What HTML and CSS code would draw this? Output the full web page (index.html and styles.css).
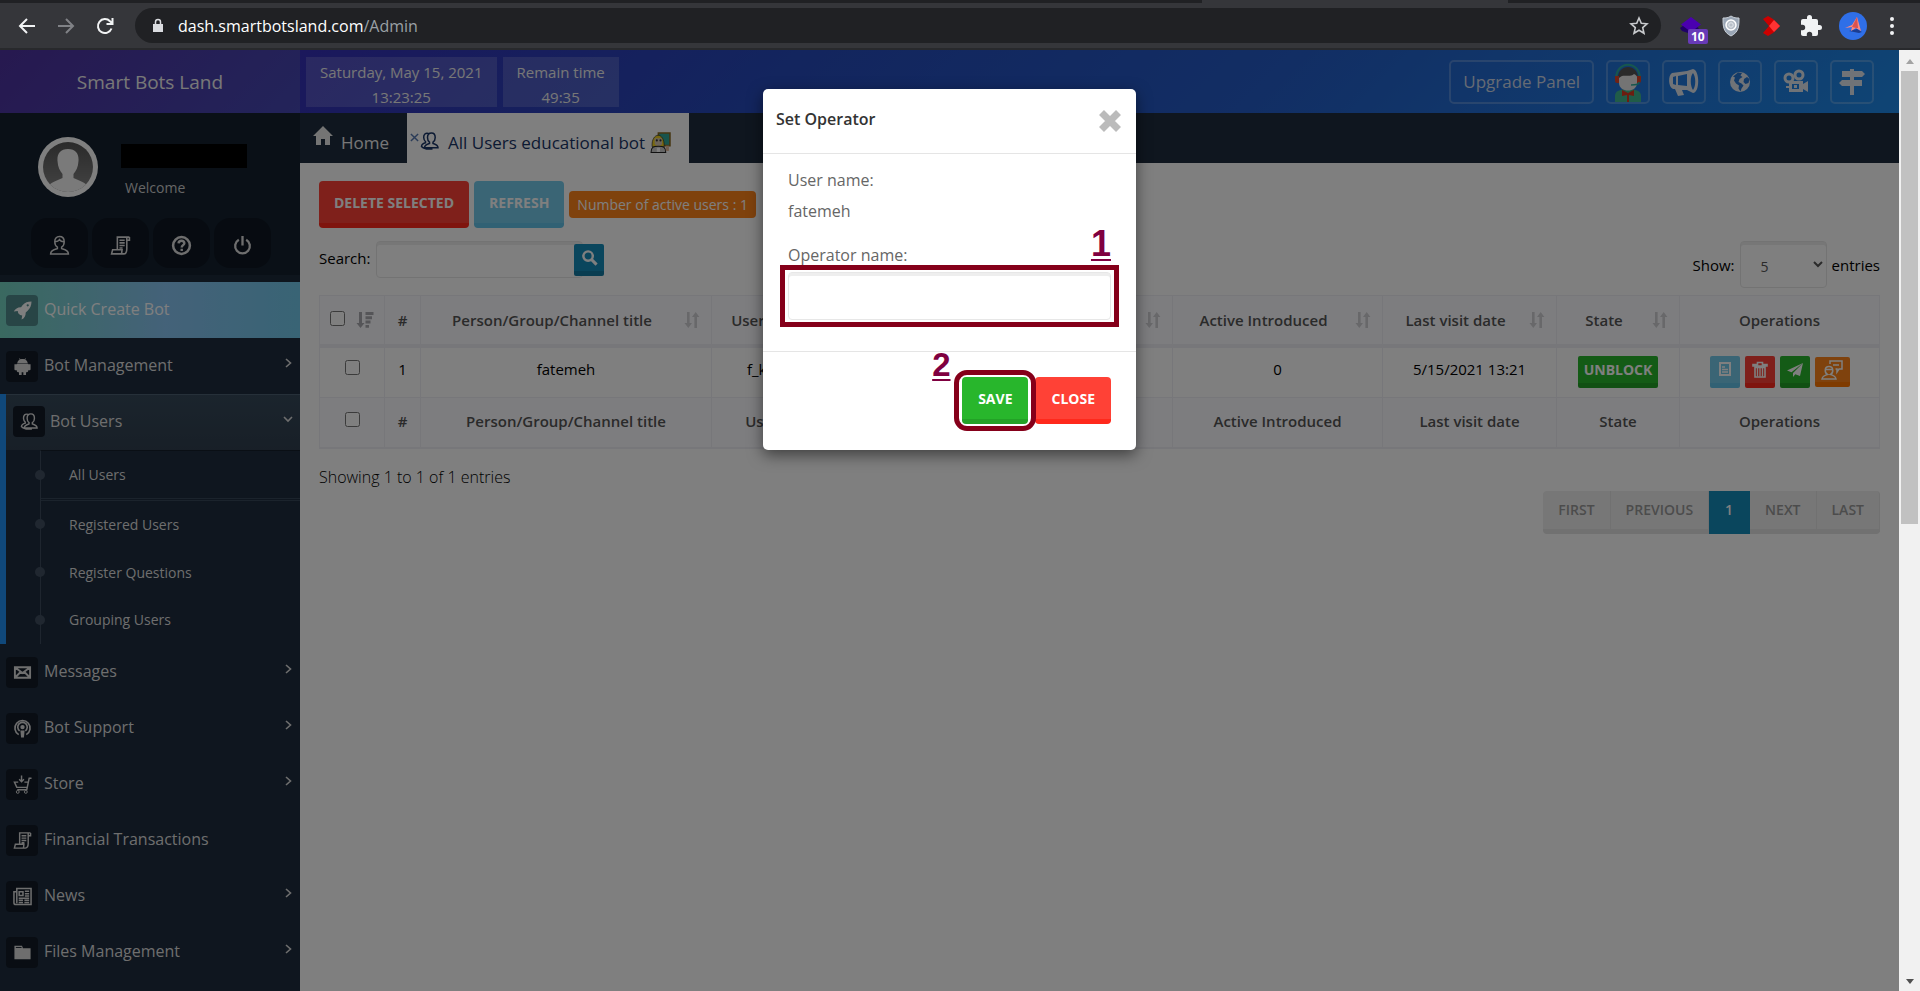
FILE: index.html
```html
<!DOCTYPE html>
<html lang="en">
<head>
	<meta charset="utf-8">
	<meta name="viewport" content="width=device-width, initial-scale=1">
	<title>Smart Bots Land</title>
	<link rel="stylesheet" href="styles.css">
</head>
<body>

	<!-- shared icons -->
	<svg class="sprite" aria-hidden="true">
		<symbol id="i-user" viewBox="0 0 20 20"><path fill="none" stroke="currentColor" stroke-width="1.4" d="M10 1.5c-3 0-4.500 2-4.500 5 0 2.500 1.200 4.300 2.500 5v1.500c-3 1-6.500 1.500-6.500 5h17c0-3.500-3.500-4-6.500-5v-1.500c1.300-.7 2.500-2.500 2.500-5 0-3-1.500-5-4.500-5zM5.800 6.500c2 0 3.500-.8 4.200-2 .8 1.200 2.200 2 4.200 2"/></symbol>
		<symbol id="i-users" viewBox="0 0 20 20"><path fill="none" stroke="currentColor" stroke-width="1.500" d="M11.500 2c-2.500 0-4 1.700-4 4.500 0 2.300 1 4 2 4.700v1.300c-2.500.8-5 1.500-5 4.300h13.500c0-2.800-2.500-3.500-5-4.300v-1.300c1.200-.7 2.200-2.400 2.200-4.700 0-2.800-1.200-4.500-3.700-4.500zM8.500 2.500C5.500 1.500 3.500 3.500 3.700 6.500c.1 2 .8 3.200 1.800 4v1.200c-2 .6-4 1.500-4 3.800 1 1.500 3 2 5 2.500h6"/></symbol>
		<symbol id="i-receipt" viewBox="0 0 20 20"><path fill="none" stroke="currentColor" stroke-width="1.500" d="M7 14V2h11.500M16 2v11c0 3-1 5-3 5H1.500l1-4h9l-.5 4M18.500 2v3H16M9 5h5M9 7.500h5M9 10h5M9 12.300h3"/></symbol>
		<symbol id="i-help" viewBox="0 0 20 20"><circle cx="10" cy="10" r="8" fill="none" stroke="currentColor" stroke-width="2.400"/><path fill="none" stroke="currentColor" stroke-width="2.300" d="M7.200 8c.2-3.500 5.800-3.200 5.500 0-.2 1.800-2.500 1.600-2.500 3.800M10.200 13v2.300"/></symbol>
		<symbol id="i-power" viewBox="0 0 20 20"><path fill="none" stroke="currentColor" stroke-width="2.200" d="M6.500 4.500a7 7 0 1 0 7 0M10 1v9"/></symbol>
		<symbol id="i-rocket" viewBox="0 0 20 20"><path fill="currentColor" d="M19.500.5c-4 0-7 1-9.500 4L8.500 6.500C5 6.300 2.500 8 .8 11l4.200-.4.500 2.200 2 2 2.200.4-.7 4.300c3-1.500 4.500-4 4.400-7.500l2-1.800c2.700-2.500 4-5.700 4.100-9.700z"/><circle cx="15.500" cy="4.500" r="1.200" fill="#508a8c"/></symbol>
		<symbol id="i-android" viewBox="0 0 20 20"><path fill="currentColor" d="M4.500 6.500c.2-2 1.200-3 2.500-3.700L6.200 1l1.900 1.300c1.200-.4 2.600-.4 3.800 0L13.800 1 13 2.800c1.300.7 2.300 1.700 2.500 3.700zM4 7h12v7.500c0 1-.5 1.500-1.300 1.500h-1v3h-2.800v-3H9.100v3H6.300v-3h-1C4.500 16 4 15.500 4 14.500zM1.500 7.500H4V14H2.500c-.6 0-1-.4-1-1zM16 7.500h2.500V13c0 .6-.4 1-1 1H16z"/></symbol>
		<symbol id="i-mail" viewBox="0 0 20 20"><path fill="none" stroke="currentColor" stroke-width="2" d="M2 4.500h16v11H2zM2 4.500l8 6 8-6M2 15.500l6-6M18 15.500l-6-6"/></symbol>
		<symbol id="i-podcast" viewBox="0 0 20 20"><path fill="none" stroke="currentColor" stroke-width="1.700" d="M6 16.500a8 8 0 1 1 8 0M7 12.500a5 5 0 1 1 6 0"/><circle cx="10" cy="8.500" r="2.300" fill="currentColor"/><path fill="currentColor" d="M7.800 12h4.400l-.7 7.500h-3z"/></symbol>
		<symbol id="i-cart" viewBox="0 0 20 20"><path fill="none" stroke="currentColor" stroke-width="1.500" d="M19.500 3.500H17l-2.500 12H4.500M15.500 13H4L1.500 7.500h4M12 7.500h4.300M9 .5v6M6.500 4.500L9 7l2.500-2.500"/><circle cx="5" cy="17.800" r="1.500" fill="none" stroke="currentColor"/><circle cx="13.500" cy="17.800" r="1.500" fill="none" stroke="currentColor"/></symbol>
		<symbol id="i-news" viewBox="0 0 20 20"><path fill="none" stroke="currentColor" stroke-width="1.600" d="M4 1.500h15v17H3c-1.500 0-2-.8-2-2V5h3zM4 5v12M6.500 5h4v4h-4zM12.500 4.500H17M12.500 7H17M12.500 9.500H17M6 11.800h11M6 14h4.500M12 14h5M6 16.300h4.500M12 16.300h5"/></symbol>
		<symbol id="i-folder" viewBox="0 0 20 20"><path fill="currentColor" d="M1.500 3h8l1 2.500h8V17h-17z"/><path stroke="#121b27" stroke-width="1" d="M3 4.700h6"/></symbol>
		<symbol id="i-right" viewBox="0 0 10 10"><path fill="none" stroke="currentColor" stroke-width="1.600" d="M3 1l4.500 4L3 9"/></symbol>
		<symbol id="i-down" viewBox="0 0 10 10"><path fill="none" stroke="currentColor" stroke-width="1.600" d="M1 3l4 4 4-4"/></symbol>
		<symbol id="i-sort" viewBox="0 0 18 18"><path fill="currentColor" d="M4 1h2.600v11H9l-3.700 5L1.500 12H4zM11.400 17H14V6h2.400L12.700 1 9 6h2.400z"/></symbol>
		<symbol id="i-sortdesc" viewBox="0 0 18 18"><path fill="currentColor" d="M3 1h3v11h2.500l-4 5-4-5H3zM9.500 1h8v3h-8zM9.500 5.300H16v3H9.500zM9.500 9.500h5v3h-5zM9.500 14H13v2.700H9.500z"/></symbol>
		<symbol id="i-search" viewBox="0 0 18 18"><circle cx="7.500" cy="7.500" r="5" fill="none" stroke="currentColor" stroke-width="2.600"/><path stroke="currentColor" stroke-width="3.200" d="M11 11l5.500 5.500"/></symbol>
		<symbol id="i-times" viewBox="0 0 22 22"><path stroke="currentColor" stroke-width="7" d="M2.500 2.500l17 17M19.500 2.500l-17 17"/></symbol>
	</svg>

	<!-- browser bar -->
	<div class="tab-strip"><span></span></div>
	<div class="toolbar">
		<button class="nav-btn" aria-label="Back"><svg viewBox="0 0 18 18"><path d="M17 9H2M9 2L2 9l7 7"/></svg></button>
		<button class="nav-btn off" aria-label="Forward"><svg viewBox="0 0 18 18"><path d="M1 9h15M9 2l7 7-7 7"/></svg></button>
		<button class="nav-btn" aria-label="Reload"><svg viewBox="0 0 18 18"><path d="M15.500 11.500A7 7 0 1 1 14 4.200L16 6M16.500 1v6h-6"/></svg></button>
		<div class="address">
			<svg class="lock" viewBox="0 0 12 15"><path fill="#dadce0" d="M1 6h10v8H1z"/><path fill="none" stroke="#dadce0" stroke-width="1.500" d="M3.500 6V4a2.500 2.500 0 0 1 5 0v2"/></svg>
			<p class="url">dash.smartbotsland.com<span>/Admin</span></p>
			<svg class="star" viewBox="0 0 20 20"><path fill="none" stroke="#c8cacd" stroke-width="1.600" d="M10 2l2.300 5.300 5.700.5-4.300 3.800 1.300 5.700-5-3-5 3 1.300-5.700L2 7.800l5.700-.5z"/></svg>
		</div>
		<div class="extensions">
			<div class="ext">
				<svg viewBox="0 0 24 24"><path fill="#1f0068" d="M1 14l11-8 9 10-9 4-9-3z"/><path fill="#4a00b0" d="M12 3l10 7.500-10 7.500L2 10.500z"/></svg>
				<span class="ext-count">10</span>
			</div>
			<svg viewBox="0 0 24 24"><path fill="#9aa6b5" stroke="#c9d0d8" d="M12 2c3 2 5 2 8 2 0 8 0 14-8 18C4 18 4 12 4 4c3 0 5 0 8-2z"/><circle cx="12" cy="11" r="5" fill="#b8bfc8" stroke="#fff" stroke-width="1.500"/><circle cx="12" cy="11" r="2.200" fill="none" stroke="#e4e8ec"/></svg>
			<svg viewBox="0 0 24 24"><path fill="#cc0000" d="M4 5l5-3 5 3 7 7-7 7-5 3-5-3 6-7z"/><path fill="#ff3333" d="M15 6l6 6-6 6-5-6z"/></svg>
			<svg viewBox="0 0 24 24"><path fill="#f1f3f4" d="M20.500 11H19V7a2 2 0 0 0-2-2h-4V3.500a2.500 2.500 0 0 0-5 0V5H4a2 2 0 0 0-2 2v3.800h1.500a2.700 2.700 0 0 1 0 5.400H2V20c0 1.100.9 2 2 2h3.800v-1.500a2.700 2.700 0 0 1 5.400 0V22H17a2 2 0 0 0 2-2v-4h1.500a2.500 2.500 0 0 0 0-5z"/></svg>
			<svg class="ext-avatar" viewBox="0 0 28 28"><circle cx="14" cy="14" r="14" fill="#2f6fe8"/><path fill="#1c3d91" d="M10 19l8-2 5 3-3 1z"/><path fill="#ff8a80" d="M18 5l4 14-5-3-5 3 1-4-7 1 7-3z"/><path fill="#d9534f" d="M18 5l1 11-2 0-4-1z"/></svg>
			<svg class="dots" viewBox="0 0 6 18"><g fill="#f1f3f4"><circle cx="3" cy="2" r="2"/><circle cx="3" cy="9" r="2"/><circle cx="3" cy="16" r="2"/></g></svg>
		</div>
	</div>

	<div class="viewport">
		<div class="page">

			<aside class="sidebar">
				<h1 class="brand">Smart Bots Land</h1>
				<div class="profile">
					<div class="profile-top">
						<svg class="avatar" viewBox="0 0 60 60"><defs><linearGradient id="av" x2="0" y2="1"><stop offset="0" stop-color="#555"/><stop offset="1" stop-color="#888"/></linearGradient><clipPath id="avc"><circle cx="30" cy="30" r="25"/></clipPath></defs><circle cx="30" cy="30" r="30" fill="#fff"/><circle cx="30" cy="30" r="25" fill="url(#av)"/><path clip-path="url(#avc)" fill="#f5f5f5" d="M30 12c-8 0-11 5-10.500 12 .3 6 2.500 10 5 13v4c-6 3-13 4-14.500 10v8h40v-8c-1.500-6-8.500-7-14.500-10v-4c2.500-3 4.700-7 5-13C41 17 38 12 30 12z"/></svg>
						<div>
							<div class="redacted"></div>
							<p class="welcome">Welcome</p>
						</div>
					</div>
					<div class="profile-actions">
						<button aria-label="Profile"><svg><use href="#i-user"/></svg></button>
						<button aria-label="Transactions"><svg><use href="#i-receipt"/></svg></button>
						<button aria-label="Help"><svg><use href="#i-help"/></svg></button>
						<button aria-label="Log out"><svg><use href="#i-power"/></svg></button>
					</div>
				</div>
				<nav class="menu">
					<a href="#" class="menu-item quick"><span class="menu-icon"><svg><use href="#i-rocket"/></svg></span>Quick Create Bot</a>
					<a href="#" class="menu-item"><span class="menu-icon"><svg><use href="#i-android"/></svg></span>Bot Management<svg class="caret"><use href="#i-right"/></svg></a>
					<div class="menu-open">
						<a href="#" class="menu-item"><span class="menu-icon"><svg><use href="#i-users"/></svg></span>Bot Users<svg class="caret"><use href="#i-down"/></svg></a>
						<div class="submenu">
							<a href="#">All Users</a>
							<a href="#">Registered Users</a>
							<a href="#">Register Questions</a>
							<a href="#">Grouping Users</a>
						</div>
					</div>
					<a href="#" class="menu-item"><span class="menu-icon"><svg><use href="#i-mail"/></svg></span>Messages<svg class="caret"><use href="#i-right"/></svg></a>
					<a href="#" class="menu-item"><span class="menu-icon"><svg><use href="#i-podcast"/></svg></span>Bot Support<svg class="caret"><use href="#i-right"/></svg></a>
					<a href="#" class="menu-item"><span class="menu-icon"><svg><use href="#i-cart"/></svg></span>Store<svg class="caret"><use href="#i-right"/></svg></a>
					<a href="#" class="menu-item"><span class="menu-icon"><svg><use href="#i-receipt"/></svg></span>Financial Transactions</a>
					<a href="#" class="menu-item"><span class="menu-icon"><svg><use href="#i-news"/></svg></span>News<svg class="caret"><use href="#i-right"/></svg></a>
					<a href="#" class="menu-item"><span class="menu-icon"><svg><use href="#i-folder"/></svg></span>Files Management<svg class="caret"><use href="#i-right"/></svg></a>
				</nav>
			</aside>

			<main class="main">
				<header class="topbar">
					<div class="clock">Saturday, May 15, 2021<br>13:23:25</div>
					<div class="clock">Remain time<br>49:35</div>
					<div class="top-actions">
						<button class="upgrade">Upgrade Panel</button>
						<button aria-label="Support"><svg viewBox="0 0 40 40"><path fill="#40b890" d="M7 40v-6c0-5 5-7 13-7s13 2 13 7v6z"/><path fill="#d83a20" d="M14 28l6 3 6-3v6l-5-1v7h-2v-7l-5 1z"/><path fill="none" stroke="#2fae9c" stroke-width="2" d="M8 17C8 -2 32 -2 32 17"/><path fill="#e8e8e8" d="M11 12h18v9c0 10-18 10-18 0z"/><path fill="#555" d="M10 17c-1-16 21-16 20 0-1-3-2-4-4-5-3 3-9 1-12 2-2 1-3 2-4 3z"/><path fill="#e0452a" d="M7 14h4v7H9q-2 0-2-2zM29 14h4v5q0 2-2 2h-2z"/><path fill="none" stroke="#2fae9c" stroke-width="1.500" d="M31 20c0 3-4 3-8 3"/></svg></button>
						<button aria-label="Announcements"><svg viewBox="0 0 40 40"><path fill="#e0e6ee" fill-rule="evenodd" d="M8 11l15-2 6-2c7 1 7 24 0 24l-6-3-5 0 2 5-6 1-3-7H9c-5-2-5-14-1-16zm1 4v7l3 1v-9zm5-1v9l9 1V12zm15-3c-3 3-3 13 0 17 3-4 3-13 0-17z"/></svg></button>
						<button aria-label="Language"><svg viewBox="0 0 40 40"><circle cx="20" cy="20" r="10" fill="#e0e6ee"/><path fill="#2474d0" d="M18 10.500l4 .5-1.500 2.500 2 1.500-3 2-1 3 3 1.500 2 2-2 3-1 3-2-3 .5-3-3-2-2-3 1-3-2-1zM24 17l3-2 2.500 2-1 4-3 1-2-2z"/></svg></button>
						<button aria-label="Videos"><svg viewBox="0 0 40 40"><circle cx="13" cy="16" r="4" fill="none" stroke="#e0e6ee" stroke-width="3"/><circle cx="23" cy="13" r="4" fill="none" stroke="#e0e6ee" stroke-width="3"/><path fill="#e0e6ee" fill-rule="evenodd" d="M13 19h14v3l5-3v11l-5-3v3H13zM16 22v5h7v-5z"/><path fill="#e0e6ee" d="M18 23h3v3h-3zM10 24h3v2h-3z"/></svg></button>
						<button aria-label="Guide"><svg viewBox="0 0 40 40"><path fill="#e0e6ee" d="M18 7h4v2h8l3 3-3 3H10V9h8zM18 15h4v3h8v6H10l-3-3 3-3h8zM18 24h4v9h-4z"/></svg></button>
					</div>
				</header>

				<nav class="tabs">
					<a href="#" class="tab"><svg class="home" viewBox="0 0 20 20"><path fill="#e8e8e8" d="M10 0l10 10h-3v9h-5v-6H8v6H3v-9H0z"/></svg>Home</a>
					<a href="#" class="tab active"><svg class="tab-close" viewBox="0 0 10 10"><path stroke="#5577b0" stroke-width="1.600" d="M1 1l8 8M9 1L1 9"/></svg><svg class="tab-users"><use href="#i-users"/></svg>All Users educational bot
						<svg class="teacher" viewBox="0 0 20 20"><path fill="#30a898" stroke="#8a6a20" stroke-width="1.500" d="M8 1h11v12H8z"/><path fill="#f0d020" stroke="#222" stroke-width=".6" d="M2 14C1 0 14-1 13.500 14z"/><path fill="#d8c8b0" d="M4.500 6h7v5c0 3-7 3-7 0z"/><path fill="#ccc" stroke="#222" d="M1 19.500c0-5 2-6 7-6s7 1 7 6z"/><path fill="#fff" d="M6.500 15h3v4h-3z"/><circle cx="6.500" cy="8" r="1" fill="#333"/><circle cx="10" cy="8" r="1" fill="#333"/><path fill="#e0b898" d="M15 13h3v5h-3z"/></svg></a>
				</nav>

				<section class="content">
					<div class="actions">
						<button class="btn btn-danger">DELETE SELECTED</button>
						<button class="btn btn-info">REFRESH</button>
						<span class="label-count">Number of active users : 1</span>
					</div>

					<div class="filters">
						<div class="search">
							<label for="search">Search:</label>
							<input type="text" id="search" class="field">
							<button class="search-btn" aria-label="Search"><svg><use href="#i-search"/></svg></button>
						</div>
						<div class="show">
							<label for="show">Show:</label>
							<select id="show" class="field"><option>5</option></select>
							<span>entries</span>
						</div>
					</div>

					<table class="users">
						<colgroup>
							<col class="c-check"><col class="c-num"><col class="c-title"><col class="c-user"><col><col class="c-active"><col class="c-date"><col class="c-state"><col class="c-ops">
						</colgroup>
						<thead>
							<tr>
								<th><div class="th"><input type="checkbox" aria-label="Select all"><svg class="sorted"><use href="#i-sortdesc"/></svg></div></th>
								<th>#</th>
								<th><div class="th"><span>Person/Group/Channel title</span><svg><use href="#i-sort"/></svg></div></th>
								<th><div class="th"><span>User name</span><svg><use href="#i-sort"/></svg></div></th>
								<th><div class="th"><span></span><svg><use href="#i-sort"/></svg></div></th>
								<th><div class="th"><span>Active Introduced</span><svg><use href="#i-sort"/></svg></div></th>
								<th><div class="th"><span>Last visit date</span><svg><use href="#i-sort"/></svg></div></th>
								<th><div class="th"><span>State</span><svg><use href="#i-sort"/></svg></div></th>
								<th>Operations</th>
							</tr>
						</thead>
						<tbody>
							<tr>
								<td><input type="checkbox" aria-label="Select fatemeh"></td>
								<td>1</td>
								<td>fatemeh</td>
								<td class="user-cell">f_k</td>
								<td></td>
								<td>0</td>
								<td>5/15/2021 13:21</td>
								<td><button class="btn btn-success">UNBLOCK</button></td>
								<td>
									<div class="ops">
										<button class="btn btn-info btn-icon" aria-label="Details"><svg viewBox="0 0 18 18"><path fill="none" stroke="#fff" stroke-width="2" d="M4 2h10v12H4z"/><path stroke="#fff" stroke-width="1.500" d="M6 6h3M6 8.500h6M6 11h6"/></svg></button>
										<button class="btn btn-danger btn-icon" aria-label="Delete"><svg viewBox="0 0 18 18"><path fill="none" stroke="#fff" stroke-width="1.600" d="M2 5V3.500h4.500v-2h5v2H16V5zM4 6.500h10V16H4z"/><path stroke="#fff" stroke-width="1.300" d="M6.500 6v9.500M9 6v9.500M11.500 6v9.500"/></svg></button>
										<button class="btn btn-success btn-icon" aria-label="Send"><svg viewBox="0 0 18 18"><path fill="#fff" d="M17 2L1 9.500l4.500 1.800zM17 2L7 12v4l2.300-2.700L14 15z"/></svg></button>
										<button class="btn btn-warning btn-icon wide" aria-label="Set operator"><svg viewBox="0 0 22 20"><path fill="none" stroke="#fff" stroke-width="1.500" d="M9 4V1h12v8h-3l-2 3v-3h-1.500M12 5h6M8 6.500c-5 0-4.500 6.500-1.500 8-3 1-5 1.500-5.500 4.500h14c-.5-3-2.500-3.500-5.500-4.500 3-1.500 3.500-8-1.500-8zM4.500 9.500h7"/></svg></button>
									</div>
								</td>
							</tr>
						</tbody>
						<tfoot>
							<tr>
								<th><input type="checkbox" aria-label="Select all rows"></th>
								<th>#</th>
								<th>Person/Group/Channel title</th>
								<th>User name</th>
								<th></th>
								<th>Active Introduced</th>
								<th>Last visit date</th>
								<th>State</th>
								<th>Operations</th>
							</tr>
						</tfoot>
					</table>

					<p class="info">Showing 1 to 1 of 1 entries</p>
					<nav class="pagination">
						<a href="#">FIRST</a>
						<a href="#">PREVIOUS</a>
						<a href="#" class="current">1</a>
						<a href="#">NEXT</a>
						<a href="#">LAST</a>
					</nav>
				</section>
			</main>

			<div class="backdrop">
				<div class="modal" role="dialog" aria-labelledby="modal-title">
					<div class="modal-header">
						<h2 id="modal-title">Set Operator</h2>
						<button class="close" aria-label="Close dialog"><svg><use href="#i-times"/></svg></button>
					</div>
					<div class="modal-body">
						<p>User name:</p>
						<p class="user-value">fatemeh</p>
						<label for="operator">Operator name:</label>
						<div class="marked">
							<input type="text" id="operator" class="field">
							<span class="mark-box"></span>
							<span class="mark-num num-1">1</span>
						</div>
					</div>
					<div class="modal-footer">
						<div class="marked">
							<button class="btn btn-success">SAVE</button>
							<span class="mark-box round"></span>
							<span class="mark-num num-2">2</span>
						</div>
						<button class="btn btn-danger">CLOSE</button>
					</div>
				</div>
			</div>
		</div>

		<div class="scrollbar">
			<span class="arrow up"></span>
			<span class="thumb"></span>
			<span class="arrow down"></span>
		</div>
	</div>

</body>
</html>
```
FILE: styles.css
```css
* {
	box-sizing: border-box;
}
body {
	margin: 0;
	height: 100vh;
	display: flex;
	flex-direction: column;
	overflow: hidden;
	font-family: "Open Sans", "Noto Sans", sans-serif;
	font-size: 14px;
	color: #000;
}
h1, h2, p {
	margin: 0;
	font-weight: 400;
}
a {
	color: inherit;
	text-decoration: none;
}
button {
	font-family: inherit;
	border: 0;
	padding: 0;
	background: none;
	cursor: pointer;
}
svg {
	display: block;
	flex: none;
}
input[type="checkbox"] {
	width: 15px;
	height: 15px;
	margin: 0;
}
.sprite {
	width: 0;
	height: 0;
	position: absolute;
}

/* browser bar */
.tab-strip {
	height: 3px;
	flex: none;
	background: #202124;
	display: flex;
	justify-content: flex-end;
}
.tab-strip span {
	width: 306px;
	margin-right: 412px;
	background: #35363a;
}
.toolbar {
	flex: none;
	height: 47px;
	display: flex;
	align-items: center;
	background: #35363a;
	border-bottom: 2px solid #28292c;
	padding: 0 25px 0 18px;
}
.nav-btn {
	margin-right: 21px;
}
.nav-btn svg {
	width: 18px;
	height: 18px;
	fill: none;
	stroke: #f1f3f4;
	stroke-width: 2;
}
.nav-btn.off svg {
	stroke: #808286;
}
.address {
	flex: 1;
	height: 35px;
	border-radius: 18px;
	background: #202124;
	display: flex;
	align-items: center;
	padding: 0 12px 0 17px;
}
.lock {
	width: 12px;
	height: 15px;
}
.url {
	flex: 1;
	margin-left: 14px;
	font-size: 16px;
	color: #fff;
}
.url span {
	color: #9aa0a6;
}
.star {
	width: 20px;
	height: 20px;
}
.extensions {
	display: flex;
	align-items: center;
	gap: 16px;
	margin-left: 18px;
}
.extensions svg {
	width: 24px;
	height: 24px;
}
.extensions .ext-avatar {
	width: 28px;
	height: 28px;
}
.extensions .dots {
	width: 6px;
	height: 18px;
	margin-left: 6px;
}
.ext {
	position: relative;
}
.ext-count {
	position: absolute;
	left: 9px;
	top: 15px;
	background: #673ab7;
	color: #fff;
	font-size: 12px;
	line-height: 15px;
	font-weight: 700;
	border-radius: 2px;
	padding: 0 3px;
}

/* page shell */
.viewport {
	flex: 1;
	min-height: 0;
	display: flex;
}
.page {
	flex: 1;
	min-width: 0;
	display: flex;
	position: relative;
	overflow: hidden;
	background: #fff;
}
.scrollbar {
	width: 21px;
	background: #f1f1f1;
	display: flex;
	flex-direction: column;
	align-items: center;
	padding: 9px 0 7px;
}
.thumb {
	width: 17px;
	height: 49%;
	margin-top: 7px;
	background: #c1c1c1;
}
.arrow {
	border: 4px solid transparent;
}
.arrow.up {
	border-top: 0;
	border-bottom: 5px solid #a3a3a3;
}
.arrow.down {
	margin-top: auto;
	border-bottom: 0;
	border-top: 5px solid #505050;
}

/* sidebar */
.sidebar {
	width: 300px;
	flex: none;
	background: #1e2c3e;
	color: #fff;
}
.brand {
	height: 63px;
	line-height: 64px;
	text-align: center;
	font-size: 19px;
	color: #f0f0f0;
	background: linear-gradient(135deg, #4e32a0, #4648b4);
}
.profile {
	height: 169px;
	padding: 24px 29px 0 31px;
	background: #14212f;
	border-bottom: 7px solid #1c2a3b;
}
.profile-top {
	display: flex;
	gap: 23px;
	padding-left: 7px;
}
.avatar {
	width: 60px;
	height: 60px;
}
.redacted {
	width: 126px;
	height: 24px;
	margin-top: 7px;
	background: #000;
}
.welcome {
	margin: 10px 0 0 4px;
	line-height: 20px;
	color: #ccc;
}
.profile-actions {
	display: flex;
	gap: 4px;
	margin-top: 20px;
}
.profile-actions button {
	flex: 1;
	height: 50px;
	border-radius: 16px;
	background: #0f1722;
	color: #ddd;
	display: grid;
	place-items: center;
}
.profile-actions svg {
	width: 21px;
	height: 21px;
	margin-top: 5px;
}
.menu-item {
	display: flex;
	align-items: center;
	height: 56px;
	padding: 0 7px 2px 6px;
	font-size: 16px;
	color: #ddd;
}
.menu-icon {
	width: 32px;
	height: 31px;
	margin-right: 6px;
	margin-top: 2px;
	border-radius: 4px;
	background: #121b27;
	display: grid;
	place-items: center;
}
.menu-icon svg {
	width: 19px;
	height: 19px;
}
.caret {
	width: 10px;
	height: 10px;
	margin: 0 0 4px auto;
}
.quick {
	color: #fff;
	background: linear-gradient(90deg, #74d2c0, #88c4f2 55%, #72c8ea);
}
.quick .menu-icon {
	background: #508a8c;
}
.menu-open {
	border-left: 6px solid #2090f4;
}
.menu-open > .menu-item {
	background: linear-gradient(#36495a, #303f4f);
	border-top: 1px solid #4c6072;
	padding-left: 7px;
	padding-bottom: 4px;
}
.menu-open .menu-icon {
	margin-right: 5px;
}
.submenu {
	margin-left: 34px;
	border-left: 1px solid #3c4b5c;
	border-top: 1px solid #141e2a;
}
.submenu a {
	display: flex;
	align-items: center;
	height: 48px;
	padding-bottom: 2px;
	color: #ddd;
}
.submenu a::before {
	content: "";
	width: 10px;
	height: 10px;
	margin-left: -6px;
	margin-right: 24px;
	border-radius: 50%;
	background: #404f60;
}
.submenu a:first-child {
	height: 50px;
	border-bottom: 3px double #364658;
	padding: 0;
}
.submenu a:last-child {
	height: 47px;
}

/* top bar */
.main {
	flex: 1;
	min-width: 0;
}
.topbar {
	height: 63px;
	display: flex;
	align-items: center;
	gap: 6px;
	padding: 0 25px 0 6px;
	background: linear-gradient(135deg, #3630b8, #264abc 30%, #245cc8 60%, #1e8aea);
}
.clock {
	height: 50px;
	padding: 3px 14px 0;
	line-height: 25px;
	font-size: 15px;
	text-align: center;
	color: #eee;
	background: rgba(255, 255, 255, 0.16);
}
.top-actions {
	margin-left: auto;
	display: flex;
	gap: 12px;
}
.top-actions button {
	width: 44px;
	height: 44px;
	border: 2px solid rgba(255, 255, 255, 0.22);
	border-radius: 5px;
}
.top-actions .upgrade {
	width: auto;
	padding: 0 12px;
	font-size: 17px;
	color: #ccd6e8;
}
.top-actions svg {
	width: 40px;
	height: 40px;
}
.tabs {
	height: 50px;
	display: flex;
	background: #1e2c3e;
}
.tab {
	display: flex;
	align-items: center;
	font-size: 17px;
	color: #eee;
	padding: 8px 18px 0 13px;
}
.home {
	width: 20px;
	height: 20px;
	margin: 0 8px 12px 0;
}
.tab.active {
	background: #fff;
	color: #183466;
	padding: 8px 18px 0 3px;
}
.tab-close {
	width: 9px;
	height: 9px;
	margin-bottom: 10px;
}
.tab-users {
	width: 20px;
	height: 20px;
	margin: 0 8px 2px 1px;
}
.teacher {
	width: 21px;
	height: 21px;
	margin-left: 5px;
}

/* content */
.content {
	padding: 18px 19px;
}
.actions {
	display: flex;
	align-items: center;
	gap: 5px;
}
.btn {
	height: 47px;
	padding: 0 15px;
	border-radius: 4px;
	border-bottom: 5px solid;
	color: #fff;
	font-size: 14px;
	font-weight: 700;
}
.btn-danger {
	background: #ff4136;
	border-color: #ff291c;
}
.btn-info {
	background: #75caeb;
	border-color: #62c2e8;
}
.btn-success {
	background: #28b62c;
	border-color: #23a127;
}
.btn-warning {
	background: #ff851b;
	border-color: #ff7701;
}
.label-count {
	padding: 0 8px;
	line-height: 27px;
	border-radius: 4px;
	background: #ff851b;
	color: #fff;
}
.filters {
	display: flex;
	justify-content: space-between;
	margin-top: 13px;
	font-size: 15px;
}
.search, .show {
	display: flex;
}
.search label {
	margin: 7px 6px 0 0;
}
.field {
	border: 1px solid #e7e7e7;
	border-radius: 4px;
	background: #fff;
	box-shadow: inset 0 3px 0 #eee;
	font-family: inherit;
	font-size: 14px;
	color: #555;
}
.search .field {
	width: 207px;
	height: 37px;
}
.search-btn {
	width: 30px;
	height: 32px;
	margin: 3px 0 0 -9px;
	background: #158cba;
	border-bottom: 5px solid #127ba3;
	border-radius: 2px;
	color: #fff;
	display: grid;
	place-items: center;
	position: relative;
}
.search-btn svg {
	width: 17px;
	height: 17px;
}
.show {
	align-items: center;
	gap: 5px;
}
.show .field {
	width: 87px;
	height: 47px;
	padding: 4px 2px 0 16px;
}

/* users table */
.users {
	width: 100%;
	margin-top: 7px;
	table-layout: fixed;
	border-collapse: collapse;
	border: 1px solid #eeeef4;
	border-bottom-width: 2px;
}
.c-check { width: 65px; }
.c-num { width: 36px; }
.c-title { width: 291px; }
.c-user { width: 146px; }
.c-active { width: 210px; }
.c-date { width: 174px; }
.c-state { width: 123px; }
.c-ops { width: 200px; }
.users th, .users td {
	border: 1px solid #eeeef4;
	padding: 0;
	text-align: center;
	font-size: 15px;
}
.users th {
	height: 50px;
	background: #fbfbff;
	color: #555;
	font-weight: 600;
}
.users thead th {
	border-bottom: 4px solid #eeeef4;
}
.users td {
	height: 52px;
	padding-bottom: 6px;
	font-weight: 400;
}
.users tfoot th {
	padding-bottom: 2px;
}
.users .user-cell {
	text-align: left;
	padding-left: 35px;
}
.users td .btn, .users .ops {
	position: relative;
	top: 3px;
}
.th {
	display: flex;
	align-items: center;
	padding-right: 10px;
}
.th span {
	flex: 1;
}
.th svg {
	width: 18px;
	height: 18px;
	color: #d0d0d4;
}
.th .sorted {
	color: #aaaab0;
}
.th input[type="checkbox"] {
	margin: 0 11px 2px 10px;
}
.users .btn {
	height: 32px;
	padding: 0 6px;
	border-radius: 2px;
	border-bottom-width: 5px;
}
.ops {
	display: flex;
	justify-content: center;
	gap: 5px;
}
.users .ops .btn {
	width: 30px;
	padding: 0;
	display: grid;
	place-items: center;
	top: 0;
}
.users .ops .wide {
	width: 35px;
	height: 30px;
	margin-top: 1px;
}
.btn-icon svg {
	width: 18px;
	height: 18px;
}
.wide svg {
	width: 22px;
	height: 20px;
}
.info {
	margin-top: 17px;
	line-height: 22px;
	font-size: 16px;
	font-weight: 300;
}
.pagination {
	display: flex;
	width: max-content;
	margin: 3px 0 0 auto;
}
.pagination a {
	height: 43px;
	line-height: 37px;
	padding: 0 15px;
	background: #eee;
	border-bottom: 5px solid #e2e2e2;
	border-right: 1px solid #e2e2e2;
	color: #999;
	font-weight: 600;
}
.pagination a:first-child {
	border-radius: 4px 0 0 4px;
}
.pagination a:last-child {
	border-radius: 0 4px 4px 0;
}
.pagination .current {
	padding: 0 16px;
	background: #158cba;
	border-color: #158cba;
	color: #fff;
}

/* modal */
.backdrop {
	position: absolute;
	inset: 0;
	background: rgba(0, 0, 0, 0.5);
	display: flex;
	justify-content: center;
	align-items: flex-start;
	padding-top: 39px;
}
.modal {
	width: 373px;
	background: #fff;
	border-radius: 5px;
	box-shadow: 0 5px 15px rgba(0, 0, 0, 0.5);
	color: #666;
	font-size: 16px;
}
.modal-header {
	height: 65px;
	display: flex;
	justify-content: space-between;
	padding: 20px 15px 0 13px;
	border-bottom: 1px solid #e5e5e5;
}
.modal-header h2 {
	font-size: 16px;
	line-height: 20px;
	font-weight: 600;
	color: #333;
}
.close {
	height: 24px;
	color: #bbb;
}
.close svg {
	width: 22px;
	height: 22px;
}
.modal-body {
	padding: 11px 25px 31px;
	line-height: 31px;
}
.user-value {
	margin-bottom: 13px;
}
.modal-body label {
	display: block;
	height: 32px;
}
.modal-body .field {
	display: block;
	width: 100%;
	height: 48px;
}
.modal-footer {
	display: flex;
	justify-content: flex-end;
	gap: 7px;
	padding: 25px 25px 26px;
	border-top: 1px solid #e5e5e5;
}
.modal-footer .btn {
	padding: 0 16px;
}

/* step markers drawn over the dialog */
.marked {
	position: relative;
}
.mark-box {
	position: absolute;
	inset: -7px -8px;
	border: 5px solid #85001a;
	pointer-events: none;
}
.mark-box.round {
	border-radius: 13px;
}
.mark-num {
	position: absolute;
	font: 700 36px/36px "Liberation Sans", Arial, sans-serif;
	color: #7f0040;
	text-decoration: underline;
	text-decoration-thickness: 2px;
	text-underline-offset: 3px;
}
.num-1 {
	right: 0;
	top: -46px;
}
.num-2 {
	left: -30px;
	top: -30px;
	font-size: 33px;
}
```
